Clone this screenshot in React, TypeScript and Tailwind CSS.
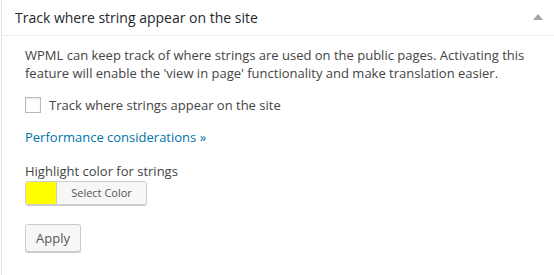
export default function App() {
  return (
    <div className="w-[554px] h-[275px] bg-white overflow-hidden font-['Open_Sans',sans-serif]">
      <div className="ml-[1px] h-full border-l border-[#e5e5e5] bg-white">
        <div className="flex h-[36px] items-center justify-between border-b border-[#eeeeee] pl-[13px] pr-[10px]">
          <h3 className="text-[14px] leading-[19px] text-[#23282d]">Track where string appear on the site</h3>
          <svg width="10" height="6" viewBox="0 0 10 6" className="mt-[-1px] mr-[1px]">
            <path d="M0 6 L5 0 L10 6 Z" fill="#a0a5aa" />
          </svg>
        </div>
        <div className="pl-[23px] pr-3 pt-[10px] text-[13px] text-[#444444]">
          <p className="leading-[18px]">
            WPML can keep track of where strings are used on the public pages. Activating this feature will enable the 'view in page' functionality and make translation easier.
          </p>
          <label className="mt-[14px] flex items-center">
            <span className="h-[16px] w-[16px] border border-[#b4b9be] bg-white shadow-[inset_0_1px_2px_rgba(0,0,0,0.1)]" />
            <span className="ml-[8px] leading-[18px]">Track where strings appear on the site</span>
          </label>
          <a className="mt-[14px] block leading-[18px] text-[#0073aa]" href="#">Performance considerations »</a>
          <div className="mt-[16px] leading-[18px]">Highlight color for strings</div>
          <div className="mt-[1px] flex h-[24px] w-[122px] overflow-hidden rounded-[3px] border border-[#cccccc] shadow-[0_1px_0_#cccccc]">
            <span className="w-[30px] bg-[#ffff00]" />
            <span className="flex flex-1 items-center justify-center border-l border-[#cccccc] bg-[#f7f7f7] text-[11px] text-[#555555]">Select Color</span>
          </div>
          <button className="mt-[19px] h-[28px] rounded-[3px] border border-[#cccccc] bg-[#f7f7f7] px-[10px] text-[13px] leading-[26px] text-[#555555] shadow-[0_1px_0_#cccccc]">Apply</button>
        </div>
      </div>
    </div>
  );
}
